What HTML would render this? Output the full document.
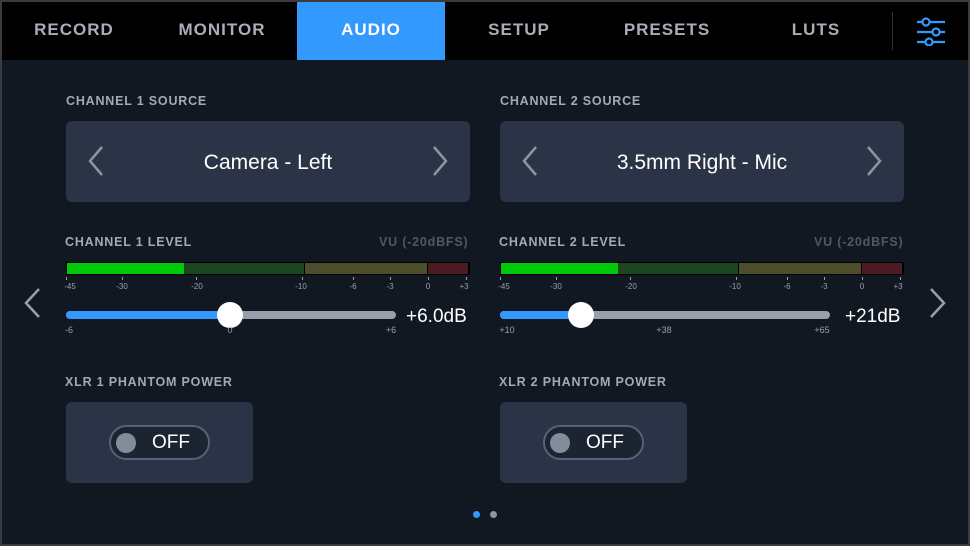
<!DOCTYPE html>
<html><head><meta charset="utf-8"><style>
*{margin:0;padding:0;box-sizing:border-box}
body{width:970px;height:546px;background:#3b3b3b;font-family:"Liberation Sans",sans-serif;overflow:hidden;position:relative}
#f{position:absolute;left:2px;top:2px;width:966px;height:542px;background:#121822;overflow:hidden}
.a{position:absolute}
#hdr{left:0;top:0;width:966px;height:58px;background:#000}
.tab{position:absolute;top:0;height:58px;line-height:56px;text-align:center;color:#a8adb8;font-weight:bold;font-size:17px;letter-spacing:1px}
.lbl{position:absolute;color:#a4a9b4;font-weight:bold;font-size:12.5px;letter-spacing:0.8px}
.box{position:absolute;background:#2a3446;border-radius:6px}
.src{color:#fff;font-size:21px;text-align:center;line-height:84px}
.tk{position:absolute;font-size:8px;color:#9aa0ab;transform:translateX(-50%)}
.tk2{font-size:9px}
.tm{position:absolute;width:1px;height:3px;background:#9aa0ab}
</style></head><body><div id="f">
<div id="hdr" class="a">
<div class="tab" style="left:0;width:144px">RECORD</div>
<div class="tab" style="left:146px;width:148px">MONITOR</div>
<div class="tab" style="left:295px;width:148px;background:#3399ff;color:#fff">AUDIO</div>
<div class="tab" style="left:443px;width:148px">SETUP</div>
<div class="tab" style="left:591px;width:148px">PRESETS</div>
<div class="tab" style="left:740px;width:148px">LUTS</div>
<div class="a" style="left:890px;top:10px;width:1px;height:38px;background:#333"></div>
<svg class="a" style="left:914px;top:10px" width="30" height="34" viewBox="0 0 30 34" fill="none" stroke="#3399ff" stroke-width="2.2">
<path d="M1 10H29M1 20H29M1 30H29"/>
<circle cx="10" cy="10" r="3.5" fill="#000"/><circle cx="20" cy="20" r="3.5" fill="#000"/><circle cx="13" cy="30" r="3.5" fill="#000"/>
</svg>
</div>

<svg class="a" style="left:20px;top:285px" width="20" height="32"><path d="M17 2L4 16L17 30" stroke="#9aa0ab" stroke-width="2.5" fill="none"/></svg>
<svg class="a" style="left:926px;top:285px" width="20" height="32"><path d="M3 2L16 16L3 30" stroke="#9aa0ab" stroke-width="2.5" fill="none"/></svg>

<div class="lbl" style="left:64px;top:92px">CHANNEL 1 SOURCE</div>
<div class="box src" style="left:64px;top:119px;width:404px;height:81px">Camera - Left
<svg class="a" style="left:20px;top:24px" width="20" height="32"><path d="M16 2L4 16L16 30" stroke="#8d94a2" stroke-width="2.5" fill="none"/></svg>
<svg class="a" style="left:364px;top:24px" width="20" height="32"><path d="M4 2L16 16L4 30" stroke="#8d94a2" stroke-width="2.5" fill="none"/></svg>
</div>
<div class="lbl" style="left:63px;top:233px">CHANNEL 1 LEVEL</div>
<div class="lbl" style="left:377px;top:233px;color:#4f5869">VU (-20dBFS)</div>
<div class="a" style="left:64px;top:260px;width:404px;height:13px;background:#000;padding:1px">
<div class="a" style="left:1px;top:1px;width:117px;height:11px;background:#00c80a"></div>
<div class="a" style="left:118px;top:1px;width:120px;height:11px;background:#1c4520"></div>
<div class="a" style="left:239px;top:1px;width:122px;height:11px;background:#4d4f2c"></div>
<div class="a" style="left:362px;top:1px;width:40px;height:11px;background:#4a1c22"></div>
</div>
<div class="tm" style="left:64px;top:275px"></div><div class="tk" style="left:68px;top:280px">-45</div>
<div class="tm" style="left:120px;top:275px"></div><div class="tk" style="left:120px;top:280px">-30</div>
<div class="tm" style="left:194px;top:275px"></div><div class="tk" style="left:195px;top:280px">-20</div>
<div class="tm" style="left:300px;top:275px"></div><div class="tk" style="left:299px;top:280px">-10</div>
<div class="tm" style="left:351px;top:275px"></div><div class="tk" style="left:351px;top:280px">-6</div>
<div class="tm" style="left:388px;top:275px"></div><div class="tk" style="left:388px;top:280px">-3</div>
<div class="tm" style="left:426px;top:275px"></div><div class="tk" style="left:426px;top:280px">0</div>
<div class="tm" style="left:464px;top:275px"></div><div class="tk" style="left:462px;top:280px">+3</div>
<div class="a" style="left:64px;top:309px;width:330px;height:8px;border-radius:4px;background:#9aa0ab"></div>
<div class="a" style="left:64px;top:309px;width:166px;height:8px;border-radius:4px;background:#3399ff"></div>
<div class="a" style="left:215px;top:300px;width:26px;height:26px;border-radius:50%;background:#fff"></div>
<div class="tk tk2" style="left:67px;top:323px">-6</div>
<div class="tk tk2" style="left:228px;top:323px">0</div>
<div class="tk tk2" style="left:389px;top:323px">+6</div>
<div class="a" style="left:404px;top:304px;color:#fff;font-size:19px">+6.0dB</div>
<div class="lbl" style="left:63px;top:373px">XLR 1 PHANTOM POWER</div>
<div class="box" style="left:64px;top:400px;width:187px;height:81px">
<div class="a" style="left:43px;top:23px;width:101px;height:35px;border:2px solid #55627a;border-radius:18px;background:#1c2331">
<div class="a" style="left:5px;top:6px;width:20px;height:20px;border-radius:50%;background:#848b9b"></div>
<div class="a" style="left:41px;top:5px;color:#fff;font-size:19px">OFF</div></div>
</div>

<div class="lbl" style="left:498px;top:92px">CHANNEL 2 SOURCE</div>
<div class="box src" style="left:498px;top:119px;width:404px;height:81px">3.5mm Right - Mic
<svg class="a" style="left:20px;top:24px" width="20" height="32"><path d="M16 2L4 16L16 30" stroke="#8d94a2" stroke-width="2.5" fill="none"/></svg>
<svg class="a" style="left:364px;top:24px" width="20" height="32"><path d="M4 2L16 16L4 30" stroke="#8d94a2" stroke-width="2.5" fill="none"/></svg>
</div>
<div class="lbl" style="left:497px;top:233px">CHANNEL 2 LEVEL</div>
<div class="lbl" style="left:812px;top:233px;color:#4f5869">VU (-20dBFS)</div>
<div class="a" style="left:498px;top:260px;width:404px;height:13px;background:#000">
<div class="a" style="left:1px;top:1px;width:117px;height:11px;background:#00c80a"></div>
<div class="a" style="left:118px;top:1px;width:120px;height:11px;background:#1c4520"></div>
<div class="a" style="left:239px;top:1px;width:122px;height:11px;background:#4d4f2c"></div>
<div class="a" style="left:362px;top:1px;width:40px;height:11px;background:#4a1c22"></div>
</div>
<div class="tm" style="left:498px;top:275px"></div><div class="tk" style="left:502px;top:280px">-45</div>
<div class="tm" style="left:554px;top:275px"></div><div class="tk" style="left:554px;top:280px">-30</div>
<div class="tm" style="left:628px;top:275px"></div><div class="tk" style="left:629px;top:280px">-20</div>
<div class="tm" style="left:734px;top:275px"></div><div class="tk" style="left:733px;top:280px">-10</div>
<div class="tm" style="left:785px;top:275px"></div><div class="tk" style="left:785px;top:280px">-6</div>
<div class="tm" style="left:822px;top:275px"></div><div class="tk" style="left:822px;top:280px">-3</div>
<div class="tm" style="left:860px;top:275px"></div><div class="tk" style="left:860px;top:280px">0</div>
<div class="tm" style="left:898px;top:275px"></div><div class="tk" style="left:896px;top:280px">+3</div>
<div class="a" style="left:498px;top:309px;width:330px;height:8px;border-radius:4px;background:#9aa0ab"></div>
<div class="a" style="left:498px;top:309px;width:82px;height:8px;border-radius:4px;background:#3399ff"></div>
<div class="a" style="left:566px;top:300px;width:26px;height:26px;border-radius:50%;background:#fff"></div>
<div class="tk tk2" style="left:505px;top:323px">+10</div>
<div class="tk tk2" style="left:662px;top:323px">+38</div>
<div class="tk tk2" style="left:820px;top:323px">+65</div>
<div class="a" style="left:843px;top:304px;color:#fff;font-size:19px">+21dB</div>
<div class="lbl" style="left:497px;top:373px">XLR 2 PHANTOM POWER</div>
<div class="box" style="left:498px;top:400px;width:187px;height:81px">
<div class="a" style="left:43px;top:23px;width:101px;height:35px;border:2px solid #55627a;border-radius:18px;background:#1c2331">
<div class="a" style="left:5px;top:6px;width:20px;height:20px;border-radius:50%;background:#848b9b"></div>
<div class="a" style="left:41px;top:5px;color:#fff;font-size:19px">OFF</div></div>
</div>

<div class="a" style="left:471px;top:509px;width:7px;height:7px;border-radius:50%;background:#3399ff"></div>
<div class="a" style="left:488px;top:509px;width:7px;height:7px;border-radius:50%;background:#8d94a2"></div>
</div></body></html>
